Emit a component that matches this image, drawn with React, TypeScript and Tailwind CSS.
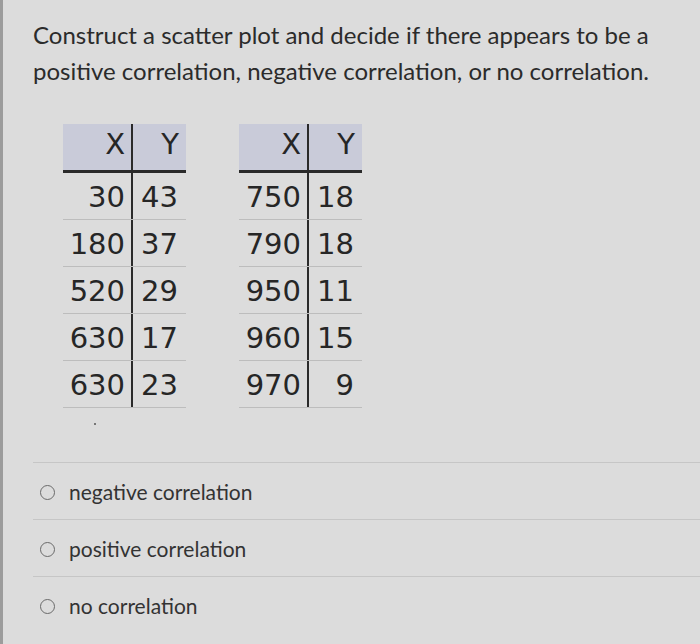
import React from 'react';

const left = [
  ['30', '43'],
  ['180', '37'],
  ['520', '29'],
  ['630', '17'],
  ['630', '23'],
];

const right = [
  ['750', '18'],
  ['790', '18'],
  ['950', '11'],
  ['960', '15'],
  ['970', '9'],
];

const options = ['negative correlation', 'positive correlation', 'no correlation'];

function DataTable({ rows }: { rows: string[][] }) {
  return (
    <div className="flex flex-col w-[123px] text-[29px] leading-none text-[#262626] font-['DejaVu_Sans',sans-serif]">
      <div className="flex h-[49px] bg-[#c9cbd9] border-b-[3px] border-[#2a2a2a]">
        <div className="w-[70px] flex items-end justify-end pr-[6px] pb-[11px] border-r-2 border-[#2a2a2a]">X</div>
        <div className="flex-1 flex items-end justify-end pr-[7px] pb-[11px]">Y</div>
      </div>
      {rows.map(([x, y], i) => (
        <div key={i} className="flex h-[47px] border-b border-[#bdbdbd]">
          <div className="w-[70px] flex items-center justify-end pr-[6px] pt-[2px] border-r-2 border-[#2a2a2a]">{x}</div>
          <div className="flex-1 flex items-center justify-end pr-[8px] pt-[2px]">{y}</div>
        </div>
      ))}
    </div>
  );
}

export default function App() {
  return (
    <div className="w-[700px] h-[644px] overflow-hidden bg-[#dcdcdc] border-l-[3px] border-[#9c9c9c] font-['Lato',sans-serif] text-[#2b2b2b]">
      <div className="pl-[30px] pt-[17px] text-[24px] leading-[36px]">
        <p>Construct a scatter plot and decide if there appears to be a</p>
        <p>positive correlation, negative correlation, or no correlation.</p>
      </div>

      <div className="flex gap-[53px] pl-[60px] mt-[35px]">
        <DataTable rows={left} />
        <DataTable rows={right} />
      </div>

      <div className="pl-[91px] pt-[15px]">
        <div className="w-[2px] h-[2px] rounded-full bg-[#555]" />
      </div>

      <div className="ml-[30px] mt-[37px]">
        {options.map((o) => (
          <div key={o} className="h-[57px] border-t border-[#c6c6c6] flex items-center gap-[14px] pl-[7px] pt-[2px]">
            <span className="w-[15px] h-[15px] rounded-full border-[1.5px] border-[#6a6a6a]" />
            <span className="text-[21px] text-[#333]">{o}</span>
          </div>
        ))}
      </div>
    </div>
  );
}
